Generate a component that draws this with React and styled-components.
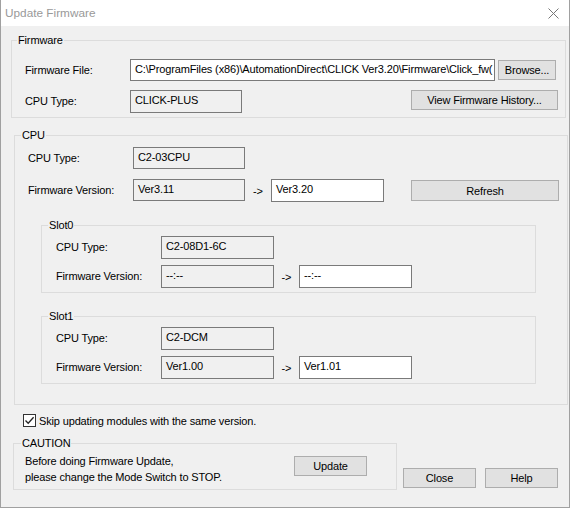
import React from "react";
import styled, { createGlobalStyle } from "styled-components";

const GlobalStyle = createGlobalStyle`
  html, body {
    margin: 0;
    padding: 0;
    background: #ffffff;
  }
  body {
    font-family: "Liberation Sans", Arial, sans-serif;
    font-size: 11px;
    letter-spacing: -0.15px;
    color: #000;
  }
`;

const Window = styled.div`
  width: 570px;
  height: 508px;
  box-sizing: border-box;
  border: 1px solid #a0a0a0;
  border-top: none;
  background: #f0f0f0;
  display: flex;
  flex-direction: column;
`;

const TitleBar = styled.div`
  height: 26px;
  flex: none;
  background: #ffffff;
  display: flex;
  align-items: center;
  justify-content: space-between;
  padding: 0 10px 0 4px;
  color: #999999;
  font-size: 11.8px;
  letter-spacing: 0;
`;

const CloseX = styled.svg`
  width: 11px;
  height: 11px;
  margin-top: 1px;
`;

const Body = styled.div`
  display: flex;
  flex-direction: column;
`;

const Group = styled.fieldset`
  margin: ${({ $mt }) => $mt}px 0 0 ${({ $ml }) => $ml}px;
  width: ${({ $w }) => $w}px;
  box-sizing: border-box;
  border: 1px solid #dcdcdc;
  padding: ${({ $pad }) => $pad};
  min-width: 0;
`;

const Legend = styled.legend`
  padding: 0 1px;
  margin-left: ${({ $ml }) => $ml}px;
  line-height: 14px;
  height: 14px;
`;

const Row = styled.div`
  display: flex;
  align-items: flex-start;
  margin-top: ${({ $mt }) => $mt || 0}px;
`;

const Label = styled.div`
  width: 105px;
  flex: none;
  height: ${({ $h }) => $h || 22}px;
  line-height: ${({ $h }) => $h || 22}px;
`;

const Field = styled.div`
  width: ${({ $w }) => $w}px;
  height: ${({ $h }) => $h || 22}px;
  box-sizing: border-box;
  border: 1px solid #7a7a7a;
  background: ${({ $white }) => ($white ? "#ffffff" : "#f0f0f0")};
  padding: 0 4px;
  line-height: ${({ $h }) => ($h || 22) - 4}px;
  white-space: nowrap;
  overflow: hidden;
  flex: none;
`;

const Arrow = styled.div`
  width: ${({ $w }) => $w}px;
  flex: none;
  text-align: center;
  line-height: 24px;
  height: 22px;
`;

const Button = styled.button`
  font-family: inherit;
  font-size: 11px;
  letter-spacing: -0.15px;
  color: #000;
  width: ${({ $w }) => $w}px;
  height: ${({ $h }) => $h || 20}px;
  margin: ${({ $m }) => $m || "0"};
  flex: none;
  box-sizing: border-box;
  border: 1px solid #adadad;
  background: #e1e1e1;
  padding: 0;
  line-height: 16px;
`;

const CheckRow = styled.label`
  display: flex;
  align-items: center;
  margin: 9px 0 0 22px;
  height: 13px;
  gap: 3px;
`;

const CheckBox = styled.span`
  width: 13px;
  height: 13px;
  box-sizing: border-box;
  border: 1px solid #333;
  background: #fff;
  display: flex;
  align-items: center;
  justify-content: center;
`;

const BottomRow = styled.div`
  display: flex;
  align-items: flex-end;
`;

const CautionBody = styled.div`
  display: flex;
  justify-content: space-between;
  align-items: flex-start;
`;

const CautionText = styled.div`
  line-height: 16px;
  padding-top: 3px;
`;

const SideButtons = styled.div`
  display: flex;
  gap: 9px;
  margin: 0 0 2px 6px;
`;

const SlotGroup = ({ name, mt, type, from, to }) => (
  <Group $mt={mt} $ml={13} $w={495} $pad="4px 0 4px 14px">
    <Legend $ml={-8}>{name}</Legend>
    <Row>
      <Label $h={23}>CPU Type:</Label>
      <Field $w={113} $h={23}>{type}</Field>
    </Row>
    <Row $mt={6}>
      <Label $h={23}>Firmware Version:</Label>
      <Field $w={113} $h={23}>{from}</Field>
      <Arrow $w={25}>-&gt;</Arrow>
      <Field $w={113} $h={23} $white>{to}</Field>
    </Row>
  </Group>
);

export default function App() {
  return (
    <>
      <GlobalStyle />
      <Window>
        <TitleBar>
          <span>Update Firmware</span>
          <CloseX viewBox="0 0 11 11">
            <path d="M0.5 0.5 L10.5 10.5 M10.5 0.5 L0.5 10.5" stroke="#777" strokeWidth="1" fill="none" />
          </CloseX>
        </TitleBar>
        <Body>
          <Group $mt={7} $ml={10} $w={555} $pad="12px 0 4px 13px">
            <Legend $ml={-8}>Firmware</Legend>
            <Row>
              <Label>Firmware File:</Label>
              <Field $w={365} $white>
                C:\ProgramFiles (x86)\AutomationDirect\CLICK Ver3.20\Firmware\Click_fw(
              </Field>
              <Button $w={58} $m="1px 0 0 3px">Browse...</Button>
            </Row>
            <Row $mt={9}>
              <Label $h={23}>CPU Type:</Label>
              <Field $w={112} $h={23}>CLICK-PLUS</Field>
              <Button $w={147} $m="0 0 0 169px">View Firmware History...</Button>
            </Row>
          </Group>

          <Group $mt={10} $ml={13} $w={554} $pad="5px 0 20px 13px">
            <Legend $ml={-7}>CPU</Legend>
            <Row>
              <Label>CPU Type:</Label>
              <Field $w={112}>C2-03CPU</Field>
            </Row>
            <Row $mt={10}>
              <Label>Firmware Version:</Label>
              <Field $w={112}>Ver3.11</Field>
              <Arrow $w={26}>-&gt;</Arrow>
              <Field $w={113} $h={23} $white>Ver3.20</Field>
              <Button $w={148} $h={21} $m="1px 0 0 27px">Refresh</Button>
            </Row>
            <SlotGroup name="Slot0" mt={16} type="C2-08D1-6C" from="--:--" to="--:--" />
            <SlotGroup name="Slot1" mt={16} type="C2-DCM" from="Ver1.00" to="Ver1.01" />
          </Group>

          <CheckRow>
            <CheckBox>
              <svg width="11" height="11" viewBox="0 0 11 11">
                <path d="M1.5 5.5 L4.2 8.3 L9.6 2.2" stroke="#222" strokeWidth="1.3" fill="none" />
              </svg>
            </CheckBox>
            Skip updating modules with the same version.
          </CheckRow>

          <BottomRow>
            <Group $mt={9} $ml={12} $w={384} $pad="0 29px 4px 11px">
              <Legend $ml={-4}>CAUTION</Legend>
              <CautionBody>
                <CautionText>
                  Before doing Firmware Update,
                  <br />
                  please change the Mode Switch to STOP.
                </CautionText>
                <Button $w={73} $m="6px 0 0 0">Update</Button>
              </CautionBody>
            </Group>
            <SideButtons>
              <Button $w={73}>Close</Button>
              <Button $w={73}>Help</Button>
            </SideButtons>
          </BottomRow>
        </Body>
      </Window>
    </>
  );
}
